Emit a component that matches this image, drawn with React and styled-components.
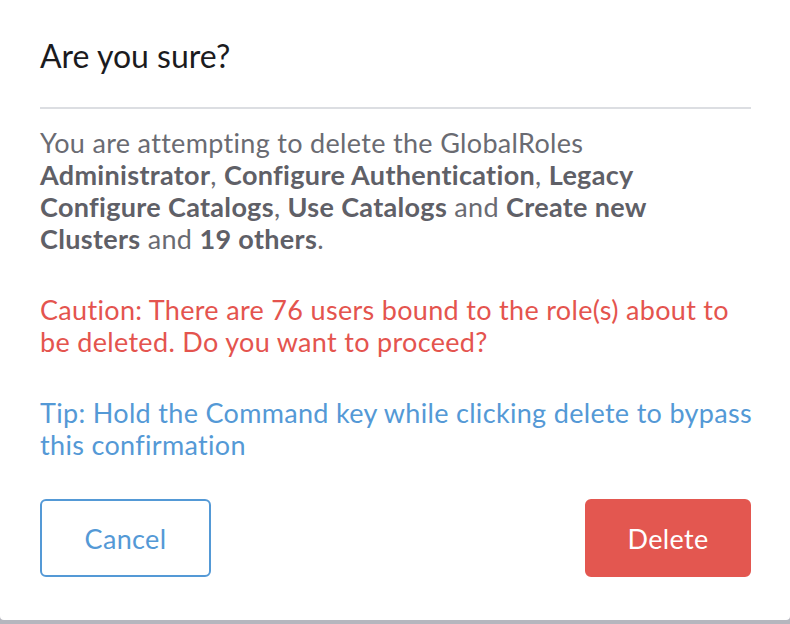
import React from "react";
import styled, { createGlobalStyle } from "styled-components";

const GlobalStyle = createGlobalStyle`
  html, body {
    margin: 0;
    padding: 0;
    background: #b6b6be;
    font-family: Lato, "Noto Sans", sans-serif;
  }
`;

const Dialog = styled.div`
  width: 790px;
  height: 620px;
  box-sizing: border-box;
  background: #ffffff;
  border-radius: 0 0 4px 4px;
  padding: 36px 39px 0 40px;
  display: flex;
  flex-direction: column;
`;

const Title = styled.h1`
  margin: 0;
  font-size: 32px;
  line-height: 40px;
  font-weight: 400;
  color: #1b1b1e;
`;

const Divider = styled.hr`
  margin: 31px 0 0 0;
  border: none;
  height: 2px;
  background: #dcdee2;
`;

const Body = styled.div`
  margin-top: 18px;
  display: flex;
  flex-direction: column;
  gap: 39px;
`;

const Text = styled.p`
  margin: 0 ${(p) => (p.$bleed ? "-4px" : "0")} 0 0;
  font-size: 27px;
  line-height: 32px;
  letter-spacing: 0.32px;
  color: ${(p) => p.$color || "#6a6b72"};

  b {
    font-weight: 700;
    color: #5f6067;
  }
`;

const Actions = styled.div`
  margin-top: 38px;
  display: flex;
  justify-content: space-between;
`;

const Button = styled.button`
  height: 78px;
  box-sizing: border-box;
  border-radius: 6px;
  font-family: Lato, "Noto Sans", sans-serif;
  font-size: 27px;
  letter-spacing: 0.35px;
  cursor: pointer;
  border: 2px solid ${(p) => (p.$danger ? "#e35750" : "#5499d6")};
  background: ${(p) => (p.$danger ? "#e35750" : "#ffffff")};
  color: ${(p) => (p.$danger ? "#ffffff" : "#5499d6")};
  width: ${(p) => (p.$danger ? "166px" : "171px")};
`;

export default function App() {
  return (
    <>
      <GlobalStyle />
      <Dialog>
        <Title>Are you sure?</Title>
        <Divider />
        <Body>
          <Text>
            You are attempting to delete the GlobalRoles <b>Administrator</b>,{" "}
            <b>Configure Authentication</b>, <b>Legacy Configure Catalogs</b>,{" "}
            <b>Use Catalogs</b> and <b>Create new Clusters</b> and{" "}
            <b>19 others</b>.
          </Text>
          <Text $color="#e4544e">
            Caution: There are 76 users bound to the role(s) about to be
            deleted. Do you want to proceed?
          </Text>
          <Text $color="#5499d6" $bleed>
            Tip: Hold the Command key while clicking delete to bypass this
            confirmation
          </Text>
        </Body>
        <Actions>
          <Button>Cancel</Button>
          <Button $danger>Delete</Button>
        </Actions>
      </Dialog>
    </>
  );
}
